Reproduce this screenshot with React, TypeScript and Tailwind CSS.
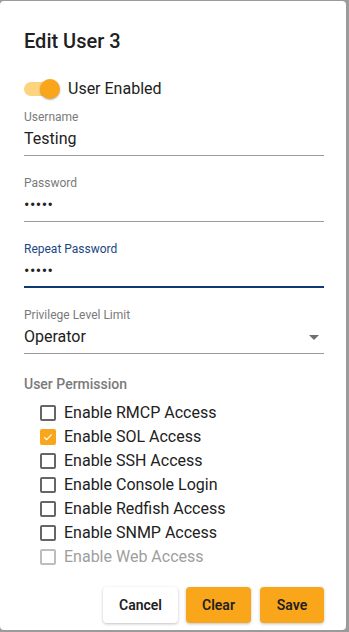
import React from "react";

const font = { fontFamily: "Roboto, 'Noto Sans', Arial, sans-serif" };

function Field({
  label,
  value,
  focused,
  select,
  dots,
}: {
  label: string;
  value: string;
  focused?: boolean;
  select?: boolean;
  dots?: boolean;
}) {
  return (
    <div className="flex flex-col">
      <div
        className={`h-4 text-xs leading-4 ${focused ? "text-[#1c4584]" : "text-[#7a7a7a]"}`}
      >
        {label}
      </div>
      <div
        className={`mt-0.5 flex h-[29px] items-start justify-between ${
          focused ? "border-b-2 border-[#0e3a73] pb-[3px]" : "border-b border-[#9a9a9a] pb-1"
        }`}
      >
        <span
          className={`${dots ? "tracking-[0.5px]" : ""} h-6 text-base leading-6 text-[#212121]`}
        >
          {value}
        </span>
        {select && (
          <svg width="24" height="24" viewBox="0 0 24 24" className="-mr-[2px]">
            <path d="M7 10l5 5 5-5z" fill="#6f6f6f" />
          </svg>
        )}
      </div>
    </div>
  );
}

function Check({ label, checked, disabled }: { label: string; checked?: boolean; disabled?: boolean }) {
  return (
    <div className="flex h-6 items-center pl-4">
      {checked ? (
        <div className="flex h-4 w-4 items-center justify-center rounded-[2px] bg-[#faa61a]">
          <svg width="12" height="12" viewBox="0 0 12 12">
            <path d="M2.2 6.3l2.5 2.4 5-5.3" fill="none" stroke="#fff" strokeWidth="1.3" />
          </svg>
        </div>
      ) : (
        <div
          className={`h-4 w-4 rounded-[2px] border-2 ${disabled ? "border-[#bdbdbd]" : "border-[#666666]"}`}
        />
      )}
      <span className={`ml-2 text-base ${disabled ? "text-[#9e9e9e]" : "text-[#212121]"}`}>{label}</span>
    </div>
  );
}

export default function App() {
  return (
    <div className="h-[632px] w-[349px] bg-[#9b9b9b] pt-px" style={font}>
      <div className="flex h-[629px] w-[346px] flex-col rounded-[4px] bg-white pl-6 pt-6">
        <div className="flex w-[300px] flex-col">
          <h2 className="text-xl leading-8 font-medium text-[#212121]">Edit User 3</h2>

          {/* switch */}
          <div className="mt-5 flex h-6 items-center">
            <div className="relative h-5 w-9">
              <div className="absolute left-0 top-[3px] h-[14px] w-[32px] rounded-full bg-[#fdd37d]" />
              <div className="absolute left-[16px] top-0 h-5 w-5 rounded-full bg-[#faa61a] shadow-[0_1px_2px_rgba(0,0,0,0.3)]" />
            </div>
            <span className="ml-2 text-base text-[#212121]">User Enabled</span>
          </div>

          <div className="mt-2 flex flex-col gap-[19px]">
            <Field label="Username" value="Testing" />
            <Field label="Password" value="•••••" dots />
            <Field label="Repeat Password" value="•••••" dots focused />
            <Field label="Privilege Level Limit" value="Operator" select />
          </div>

          <div className="mt-5 h-5 text-sm leading-5 font-medium text-[#7a7a7a]">User Permission</div>
          <div className="mt-[7px] flex flex-col">
            <Check label="Enable RMCP Access" />
            <Check label="Enable SOL Access" checked />
            <Check label="Enable SSH Access" />
            <Check label="Enable Console Login" />
            <Check label="Enable Redfish Access" />
            <Check label="Enable SNMP Access" />
            <Check label="Enable Web Access" disabled />
          </div>

          <div className="mt-[18px] flex justify-end gap-2">
            <button className="h-9 w-[75px] rounded-[4px] bg-white text-sm font-semibold text-[#212121] shadow-[0_1px_3px_rgba(0,0,0,0.25)]">
              Cancel
            </button>
            <button className="h-9 w-[65px] rounded-[4px] bg-[#faa61a] text-sm font-semibold text-[#212121] shadow-[0_1px_3px_rgba(0,0,0,0.25)]">
              Clear
            </button>
            <button className="ml-px h-9 w-[64px] rounded-[4px] bg-[#faa61a] text-sm font-semibold text-[#212121] shadow-[0_1px_3px_rgba(0,0,0,0.25)]">
              Save
            </button>
          </div>
        </div>
      </div>
    </div>
  );
}
